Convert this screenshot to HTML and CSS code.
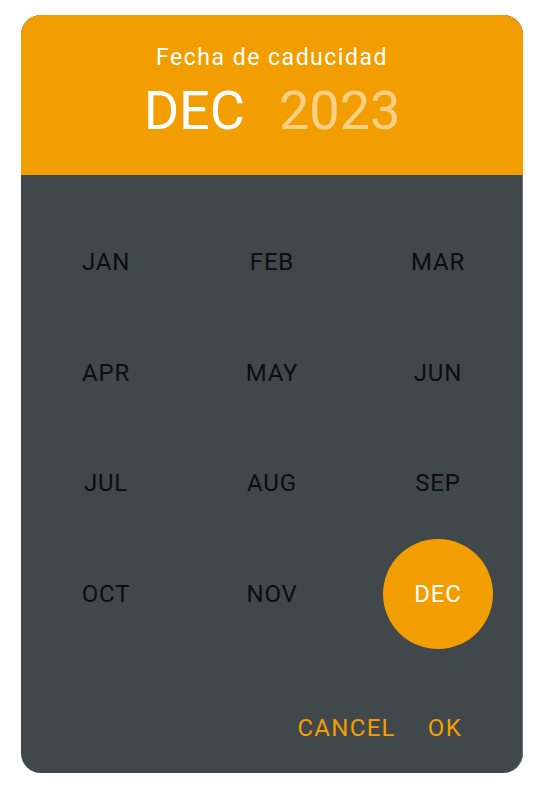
FILE: index.html
```html
<!DOCTYPE html>
<html lang="es">
<head>
<meta charset="utf-8">
<title>Fecha de caducidad</title>
<link rel="stylesheet" href="styles.css">
</head>
<body>
<div class="dialog">
  <header class="dialog-header">
    <div class="dialog-title">Fecha de caducidad</div>
    <div class="selection">
      <span class="sel-month">DEC</span>
      <span class="sel-year">2023</span>
    </div>
  </header>
  <div class="dialog-body">
    <div class="months">
      <div class="month"><span>JAN</span></div>
      <div class="month"><span>FEB</span></div>
      <div class="month"><span>MAR</span></div>
      <div class="month"><span>APR</span></div>
      <div class="month"><span>MAY</span></div>
      <div class="month"><span>JUN</span></div>
      <div class="month"><span>JUL</span></div>
      <div class="month"><span>AUG</span></div>
      <div class="month"><span>SEP</span></div>
      <div class="month"><span>OCT</span></div>
      <div class="month"><span>NOV</span></div>
      <div class="month selected"><span>DEC</span></div>
    </div>
    <div class="actions">
      <button class="action">CANCEL</button>
      <button class="action">OK</button>
    </div>
  </div>
</div>
</body>
</html>
```
FILE: styles.css
```css
html, body {
  margin: 0;
  padding: 0;
  background: #ffffff;
}

body {
  font-family: Roboto, "Noto Sans", sans-serif;
  padding: 15px 25px 27px 21px;
}

.dialog {
  width: 502px;
  border-radius: 20px;
  overflow: hidden;
  background: #41484b;
  box-shadow: inset -1px 0 0 #6b7174;
}

.dialog-header {
  background: #f39e00;
  height: 160px;
  box-sizing: border-box;
  padding-top: 28px;
  text-align: center;
  color: #ffffff;
}

.dialog-title {
  font-size: 23px;
  line-height: 30px;
  letter-spacing: 1.5px;
}

.selection {
  margin-top: 7px;
  font-size: 54px;
  line-height: 62px;
  display: flex;
  justify-content: center;
  gap: 34px;
}

.sel-year {
  color: rgba(255, 255, 255, 0.52);
}

.dialog-body {
  padding: 32px 2px 27px;
}

.months {
  display: grid;
  grid-template-columns: repeat(3, 1fr);
  grid-auto-rows: 110.5px;
}

.month {
  display: flex;
  align-items: center;
  justify-content: center;
  font-size: 24px;
  color: #0c0e10;
  letter-spacing: 0.8px;
}

.month.selected span {
  width: 110px;
  height: 110px;
  border-radius: 50%;
  background: #f39e00;
  color: #ffffff;
  display: flex;
  align-items: center;
  justify-content: center;
}

.actions {
  display: flex;
  justify-content: flex-end;
  gap: 8px;
  padding: 61px 47px 0 0;
}

.action {
  background: none;
  border: 0;
  padding: 0 12px;
  height: 36px;
  font-family: inherit;
  font-size: 24px;
  letter-spacing: 1.3px;
  color: #f39e00;
}
```
